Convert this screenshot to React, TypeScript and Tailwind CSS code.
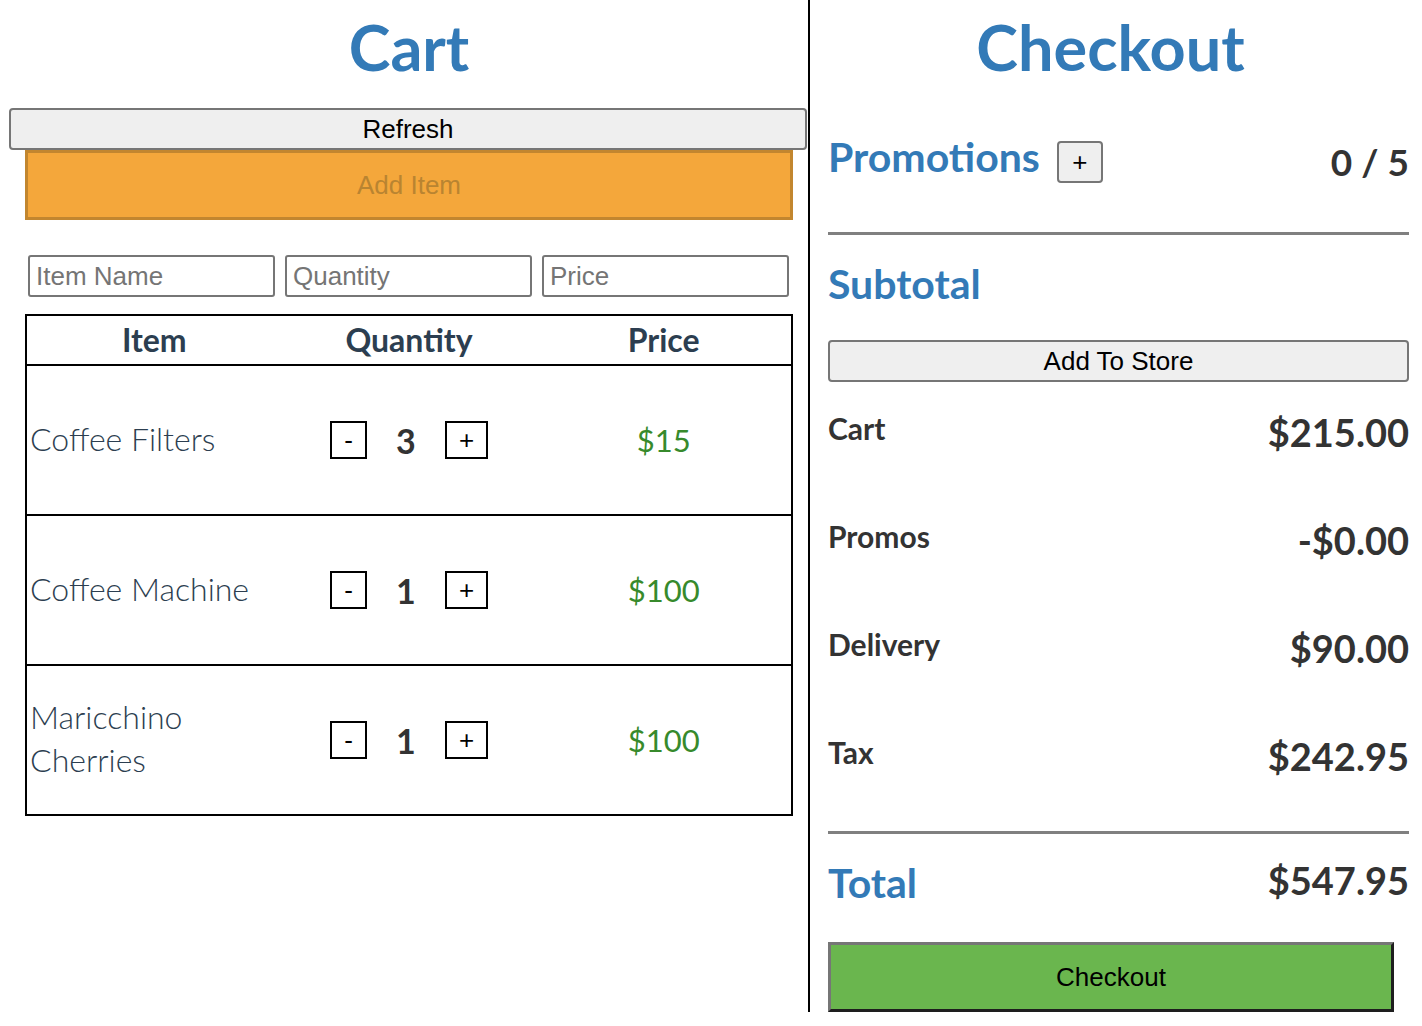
import React from 'react';

const items = [
  { name: 'Coffee Filters', qty: 3, price: '$15' },
  { name: 'Coffee Machine', qty: 1, price: '$100' },
  { name: 'Maricchino Cherries', qty: 1, price: '$100' },
];

const summary = [
  { label: 'Cart', value: '$215.00' },
  { label: 'Promos', value: '-$0.00' },
  { label: 'Delivery', value: '$90.00' },
  { label: 'Tax', value: '$242.95' },
];

const CartPanel: React.FC = () => (
  <div className="w-[810px] shrink-0 border-r-2 border-black">
    <h1 className="h-[108px] pt-[9px] pl-[10px] text-center text-[63px] leading-[1.2] font-bold text-[#337ab7]">Cart</h1>

    <button className="ml-[9px] block h-[42px] w-[798px] rounded-[4px] border-2 border-[#767676] bg-[#efefef] font-['Liberation_Sans',sans-serif] text-[26px] text-black">
      Refresh
    </button>
    <button className="ml-[25px] block h-[70px] w-[768px] border-[3px] border-[#c2862f] bg-[#f4a73b] font-['Liberation_Sans',sans-serif] text-[26px] text-[#b98431]">
      Add Item
    </button>

    <div className="ml-[28px] mt-[35px] flex gap-[10px]">
      {['Item Name', 'Quantity', 'Price'].map((p) => (
        <input
          key={p}
          placeholder={p}
          className="h-[42px] w-[247px] rounded-[3px] border-2 border-[#767676] px-[6px] font-['Liberation_Sans',sans-serif] text-[26px] placeholder:text-[#757575]"
        />
      ))}
    </div>

    {/* cart table */}
    <div className="ml-[25px] mt-[17px] w-[768px] border-2 border-black text-[#2c3e50]">
      <div className="grid h-[48px] grid-cols-3 items-center text-center text-[32px] font-bold">
        <div>Item</div>
        <div>Quantity</div>
        <div>Price</div>
      </div>
      {items.map((item) => (
        <div key={item.name} className="grid h-[150px] grid-cols-3 items-center border-t-2 border-black">
          <div className="-mt-[4px] pl-[3px] pr-[8px] text-[32px] leading-[43px] font-light">{item.name}</div>
          <div className="flex items-center justify-center">
            <button className="h-[38px] w-[37px] border-2 border-black bg-white font-['Liberation_Sans',sans-serif] text-[26px] leading-none text-black">-</button>
            <span className="w-[78px] text-center text-[34px] font-bold text-[#333]">{item.qty}</span>
            <button className="h-[38px] w-[43px] border-2 border-black bg-white font-['Liberation_Sans',sans-serif] text-[26px] leading-none text-black">+</button>
          </div>
          <div className="text-center text-[31px] text-[#378a2c]">{item.price}</div>
        </div>
      ))}
    </div>
  </div>
);

const CheckoutPanel: React.FC = () => (
  <div className="flex-1 pl-[18px] pr-[13px] text-[#333]">
    <h1 className="h-[108px] pt-[9px] pr-[16px] text-center text-[63px] leading-[1.2] font-bold text-[#337ab7]">Checkout</h1>

    <div className="mt-[33px] flex h-[42px] items-center">
      <h2 className="-mt-[10px] text-[41px] leading-[1.2] font-bold text-[#337ab7]">Promotions</h2>
      <button className="ml-[17px] h-[42px] w-[46px] rounded-[4px] border-2 border-[#767676] bg-[#efefef] font-['Liberation_Sans',sans-serif] text-[26px] leading-none text-black">+</button>
      <span className="ml-auto text-[37px] font-bold">0 / 5</span>
    </div>

    <hr className="mt-[49px] h-[3px] border-0 bg-[#808080]" />

    <h2 className="mt-[24px] text-[41px] leading-[1.2] font-bold text-[#337ab7]">Subtotal</h2>

    <button className="mt-[32px] block h-[42px] w-full rounded-[4px] border-2 border-[#767676] bg-[#efefef] font-['Liberation_Sans',sans-serif] text-[26px] text-black">
      Add To Store
    </button>

    <div className="mt-[28px] flex flex-col gap-[63px]">
      {summary.map((row) => (
        <div key={row.label} className="flex h-[45px] items-start justify-between">
          <span className="text-[30px] leading-[1.2] font-bold">{row.label}</span>
          <span className="text-[38px] leading-[1.2] font-bold">{row.value}</span>
        </div>
      ))}
    </div>

    <hr className="mt-[52px] h-[3px] border-0 bg-[#808080]" />

    <div className="mt-[24px] flex items-start justify-between">
      <h2 className="text-[41px] leading-[1.2] font-bold text-[#337ab7]">Total</h2>
      <span className="text-[38px] leading-[1.2] font-bold">$547.95</span>
    </div>

    <button className="mt-[35px] block h-[70px] w-[566px] border-[3px] border-t-[#767676] border-l-[#767676] border-r-[#1e1e1e] border-b-[#1e1e1e] bg-[#6ab64e] font-['Liberation_Sans',sans-serif] text-[26px] text-black">
      Checkout
    </button>
  </div>
);

export default function App() {
  return (
    <div className="flex bg-white font-['Lato',sans-serif]">
      <CartPanel />
      <CheckoutPanel />
    </div>
  );
}
